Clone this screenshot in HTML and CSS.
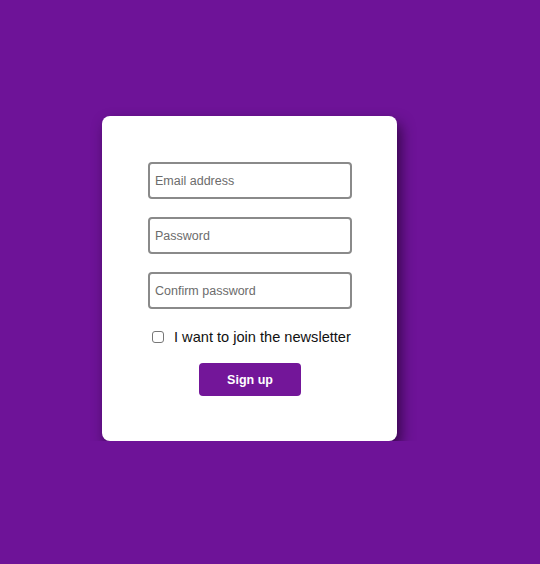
FILE: index.html
```html
<!DOCTYPE html>
<html>
<head>
<meta charset="utf-8">
<link rel="stylesheet" href="styles.css">
</head>
<body>
<div class="page">
  <form class="card">
    <input class="field" type="email" placeholder="Email address">
    <input class="field" type="password" placeholder="Password">
    <input class="field" type="password" placeholder="Confirm password">
    <label class="check"><input type="checkbox" class="box"><span>I want to join the newsletter</span></label>
    <button class="btn" type="button">Sign up</button>
  </form>
</div>
</body>
</html>
```
FILE: styles.css
```css
html, body {
  margin: 0;
  padding: 0;
  background: #6e1398;
  font-family: "Liberation Sans", Arial, sans-serif;
}
.page {
  padding: 116px 0 0 102px;
}
.card {
  box-sizing: border-box;
  width: 295px;
  height: 325px;
  background: #fff;
  border-radius: 8px;
  box-shadow: 4px 7px 14px rgba(30, 0, 40, 0.7);
  padding: 46px 45px 0 46px;
  display: flex;
  flex-direction: column;
  align-items: center;
}
.field {
  flex-shrink: 0;
  box-sizing: border-box;
  width: 204px;
  height: 37px;
  border: 2px solid #8a8a8a;
  border-radius: 4px;
  padding: 0 5px;
  font-family: "Liberation Sans", Arial, sans-serif;
  font-size: 12.5px;
  color: #333;
  margin: 0 0 18px 0;
  outline: none;
}
.field::placeholder {
  color: #6c6c6c;
}
.check {
  flex-shrink: 0;
  display: flex;
  align-items: center;
  align-self: flex-start;
  white-space: nowrap;
  margin-top: 0;
  font-size: 14.6px;
  color: #111;
  height: 20px;
}
.box {
  flex-shrink: 0;
  width: 12px;
  height: 12px;
  margin: 0 10px 0 4px;
  appearance: none;
  border: 1px solid #777;
  border-radius: 3px;
  background: #fff;
}
.btn {
  flex-shrink: 0;
  margin-top: 16px;
  width: 102px;
  height: 33px;
  border: none;
  border-radius: 4px;
  background: #731699;
  color: #fff;
  font-family: "Liberation Sans", Arial, sans-serif;
  font-size: 12.5px;
  font-weight: bold;
}
```
